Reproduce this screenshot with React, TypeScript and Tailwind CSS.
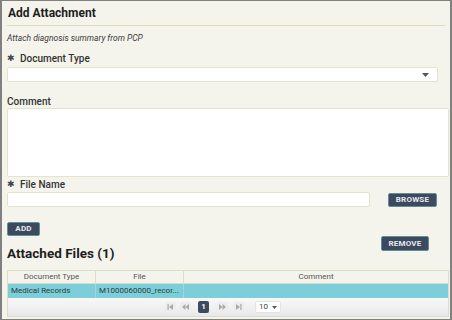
const font = { fontFamily: 'Roboto, "Liberation Sans", sans-serif' }

function Btn({ label, className = '' }: { label: string; className?: string }) {
  return (
    <button
      className={`flex items-center justify-center rounded-[2px] border border-[#5f8f9c] bg-[#3d4a5e] text-[8px] font-bold tracking-wide text-[#e3ebf3] ${className}`}
    >
      {label}
    </button>
  )
}

function Req() {
  return <span className="mr-[5px] text-[9px] text-[#444]">✱</span>
}

function PagerIcon({ kind }: { kind: 'first' | 'prev' | 'next' | 'last' }) {
  return (
    <div className="flex h-[11px] w-[11px] items-center justify-center rounded-[2px] bg-[#ededed]">
      <svg width="7" height="6" viewBox="0 0 7 6" fill="#a9a9a9">
        {kind === 'first' && (
          <>
            <rect x="0.5" y="0" width="1.2" height="6" />
            <path d="M6 0 L2 3 L6 6 Z" />
          </>
        )}
        {kind === 'prev' && (
          <>
            <path d="M3.5 0 L0 3 L3.5 6 Z" />
            <path d="M7 0 L3.5 3 L7 6 Z" />
          </>
        )}
        {kind === 'next' && (
          <>
            <path d="M0 0 L3.5 3 L0 6 Z" />
            <path d="M3.5 0 L7 3 L3.5 6 Z" />
          </>
        )}
        {kind === 'last' && (
          <>
            <path d="M1 0 L5 3 L1 6 Z" />
            <rect x="5.3" y="0" width="1.2" height="6" />
          </>
        )}
      </svg>
    </div>
  )
}

export default function App() {
  return (
    <div
      style={font}
      className="flex h-[320px] w-[452px] flex-col border-y border-l-2 border-r-2 border-[#808080] bg-[#f5f4ec] text-[#2b2b2b]"
    >
      <div className="px-[5px]">
        <h1 className="pt-[4px] pb-[4px] pl-[1px] text-[12px] font-bold leading-[16px] text-[#1e1e1e]">
          Add Attachment
        </h1>
        <div className="h-px bg-[#dcdcb8]" />
      </div>
      <div className="flex flex-col pl-[5px]">
        <p className="mt-[6px] text-[8.5px] italic leading-[12px] text-[#3a3a3a]">
          Attach diagnosis summary from PCP
        </p>
        <label className="mt-[8px] flex items-center text-[10px] font-medium leading-[13px] text-[#333]">
          <Req />
          Document Type
        </label>
        <div className="mt-[2px] flex h-[15px] w-[431px] items-center justify-end rounded-[2px] border border-[#e4e4cc] bg-white pr-[8px]">
          <svg width="7" height="4" viewBox="0 0 7 4">
            <path d="M0 0 H7 L3.5 4 Z" fill="#555" />
          </svg>
        </div>
        <label className="mt-[13px] text-[10px] font-medium leading-[13px] text-[#333]">Comment</label>
        <div className="h-[69px] w-[442px] rounded-[2px] border border-[#e4e4cc] bg-white" />
        <label className="mt-px flex items-center text-[10px] font-medium leading-[13px] text-[#333]">
          <Req />
          File Name
        </label>
        <div className="mt-px flex items-center">
          <div className="h-[15px] w-[363px] rounded-[2px] border border-[#e4e4cc] bg-white" />
          <Btn label="BROWSE" className="ml-[18px] h-[14px] w-[49px]" />
        </div>
        <div className="mt-[15px] flex">
          <Btn label="ADD" className="h-[14px] w-[33px]" />
        </div>
        <div className="flex items-end justify-between pr-[21px]">
          <h2 className="mt-[6px] text-[13.5px] font-bold leading-[18px] text-[#1e1e1e]">Attached Files (1)</h2>
          <Btn label="REMOVE" className="mb-[11px] h-[15px] w-[48px]" />
        </div>
        <div className="mt-[8px] w-[442px] border border-[#dcdcc8] text-[8px]">
          <div className="grid h-[13px] grid-cols-[88px_88px_1fr] items-center border-b border-[#dcdcc8] bg-[#f5f4ec] text-center text-[#555]">
            <div className="border-r border-[#dcdcc8] leading-[12px]">Document Type</div>
            <div className="border-r border-[#dcdcc8] leading-[12px]">File</div>
            <div className="leading-[12px]">Comment</div>
          </div>
          <div className="grid h-[14px] grid-cols-[88px_88px_1fr] items-center bg-[#7ccfd8] text-[#2f3b40]">
            <div className="h-full border-r border-[#9ed8de] pl-[3px] leading-[14px]">Medical Records</div>
            <div className="h-full border-r border-[#9ed8de] pl-[3px] leading-[14px]">M1000060000_recor...</div>
            <div />
          </div>
          <div className="flex h-[18px] items-center bg-gradient-to-b from-[#f8f8f8] to-[#e9e9e9] pl-[157px]">
            <PagerIcon kind="first" />
            <div className="w-[4px]" />
            <PagerIcon kind="prev" />
            <div className="ml-[7px] flex h-[12px] w-[11px] items-center justify-center rounded-[2px] bg-[#3d4a5e] text-[8px] font-bold text-white">
              1
            </div>
            <div className="w-[8px]" />
            <PagerIcon kind="next" />
            <div className="w-[5px]" />
            <PagerIcon kind="last" />
            <div className="ml-[11px] flex h-[12px] w-[26px] items-center justify-between rounded-[2px] border border-[#e4e4e4] bg-white px-[3px] text-[8px] text-[#444]">
              <span>10</span>
              <svg width="5" height="3" viewBox="0 0 5 3">
                <path d="M0 0 H5 L2.5 3 Z" fill="#555" />
              </svg>
            </div>
          </div>
        </div>
      </div>
    </div>
  )
}
